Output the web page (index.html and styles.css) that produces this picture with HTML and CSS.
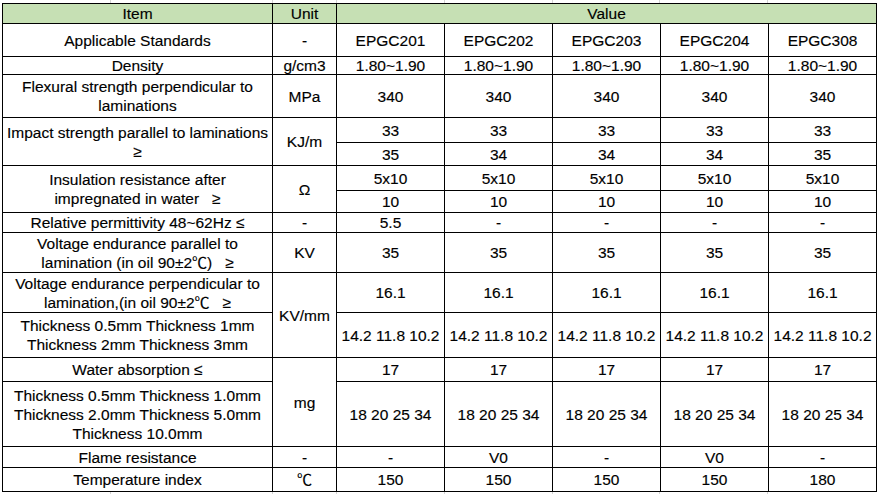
FILE: index.html
```html
<!DOCTYPE html>
<html>
<head>
<meta charset="utf-8">
<link rel="stylesheet" href="styles.css">
</head>
<body>
<table class="spec">
  <colgroup>
    <col class="c-item"><col class="c-unit">
    <col class="c-val"><col class="c-val"><col class="c-val"><col class="c-val"><col class="c-val">
  </colgroup>
  <tr class="r-head"><th>Item</th><th>Unit</th><th colspan="5">Value</th></tr>
  <tr class="r-std"><td>Applicable Standards</td><td>-</td><td>EPGC201</td><td>EPGC202</td><td>EPGC203</td><td>EPGC204</td><td>EPGC308</td></tr>
  <tr class="r-den"><td>Density</td><td>g/cm3</td><td>1.80~1.90</td><td>1.80~1.90</td><td>1.80~1.90</td><td>1.80~1.90</td><td>1.80~1.90</td></tr>
  <tr class="r-flex"><td class="multi">Flexural strength perpendicular to<br>laminations</td><td>MPa</td><td>340</td><td>340</td><td>340</td><td>340</td><td>340</td></tr>
  <tr class="r-imp1"><td rowspan="2" class="multi nowrap">Impact strength parallel to laminations<br>≥</td><td rowspan="2">KJ/m</td><td>33</td><td>33</td><td>33</td><td>33</td><td>33</td></tr>
  <tr class="r-imp2"><td>35</td><td>34</td><td>34</td><td>34</td><td>35</td></tr>
  <tr class="r-ins1"><td rowspan="2" class="multi">Insulation resistance after<br>impregnated in water &nbsp;&nbsp;≥</td><td rowspan="2">Ω</td><td>5x10</td><td>5x10</td><td>5x10</td><td>5x10</td><td>5x10</td></tr>
  <tr class="r-ins2"><td>10</td><td>10</td><td>10</td><td>10</td><td>10</td></tr>
  <tr class="r-rel"><td>Relative permittivity 48~62Hz ≤</td><td>-</td><td>5.5</td><td>-</td><td>-</td><td>-</td><td>-</td></tr>
  <tr class="r-vpar"><td class="multi">Voltage endurance parallel to<br>lamination (in oil 90±2<span class="cjk">℃</span>) &nbsp;&nbsp;≥</td><td>KV</td><td>35</td><td>35</td><td>35</td><td>35</td><td>35</td></tr>
  <tr class="r-vper"><td class="multi">Voltage endurance perpendicular to<br>lamination,(in oil 90±2<span class="cjk">℃</span> &nbsp;&nbsp;≥</td><td rowspan="2">KV/mm</td><td>16.1</td><td>16.1</td><td>16.1</td><td>16.1</td><td>16.1</td></tr>
  <tr class="r-thk"><td class="multi">Thickness 0.5mm Thickness 1mm<br>Thickness 2mm Thickness 3mm</td><td>14.2 11.8 10.2</td><td>14.2 11.8 10.2</td><td>14.2 11.8 10.2</td><td>14.2 11.8 10.2</td><td>14.2 11.8 10.2</td></tr>
  <tr class="r-wat"><td>Water absorption ≤</td><td rowspan="2">mg</td><td>17</td><td>17</td><td>17</td><td>17</td><td>17</td></tr>
  <tr class="r-thk2"><td class="multi">Thickness 0.5mm Thickness 1.0mm<br>Thickness 2.0mm Thickness 5.0mm<br>Thickness 10.0mm</td><td>18 20 25 34</td><td>18 20 25 34</td><td>18 20 25 34</td><td>18 20 25 34</td><td>18 20 25 34</td></tr>
  <tr class="r-flame"><td>Flame resistance</td><td>-</td><td>-</td><td>V0</td><td>-</td><td>V0</td><td>-</td></tr>
  <tr class="r-temp"><td>Temperature index</td><td><span class="cjk">℃</span></td><td>150</td><td>150</td><td>150</td><td>150</td><td>180</td></tr>
</table>
</body>
</html>
```

FILE: styles.css
```css
html, body {
  margin: 0;
  padding: 0;
}

body {
  min-height: 494px;
  box-sizing: border-box;
  padding: 3px 0 0 2px;
  font-family: "Liberation Sans", Arial, "Noto Sans CJK SC", sans-serif;
  font-size: 15.5px;
  color: #000;
  background-color: #fff;
  /* faint spreadsheet gridlines visible around the table */
  background-image:
    linear-gradient(#d4d4d4, #d4d4d4),
    linear-gradient(#d4d4d4, #d4d4d4),
    linear-gradient(#d4d4d4, #d4d4d4),
    linear-gradient(#d4d4d4, #d4d4d4),
    linear-gradient(#d4d4d4, #d4d4d4),
    linear-gradient(#d4d4d4, #d4d4d4),
    linear-gradient(#d4d4d4, #d4d4d4);
  background-size: 1px 100%;
  background-repeat: no-repeat;
  background-position: 110px 0, 272px 0, 336px 0, 444px 0, 552px 0, 659px 0, 767px 0;
}

.spec {
  border-collapse: collapse;
  table-layout: fixed;
  width: 873px;
}

.c-item { width: 270px; }
.c-unit { width: 64px; }
.c-val { width: 108px; }

.spec th,
.spec td {
  border: 1px solid #000;
  padding: 0;
  text-align: center;
  vertical-align: middle;
  font-weight: normal;
  line-height: 17px;
  white-space: nowrap;
  overflow: visible;
  background: #fff;
  -webkit-text-stroke: 0.15px #000;
}

.spec th {
  background: #c6e0b4;
}

.spec .multi {
  line-height: 19px;
}

.cjk {
  font-family: "Noto Sans CJK SC", "Liberation Sans", sans-serif;
  font-size: 15px;
  line-height: 0;
}

.r-head { height: 20px; }
.r-std { height: 33px; }
.r-den { height: 18px; }
.r-flex { height: 43px; }
.r-imp1 { height: 25px; }
.r-imp2 { height: 23px; }
.r-ins1 { height: 25px; }
.r-ins2 { height: 22px; }
.r-rel { height: 20px; }
.r-vpar { height: 40px; }
.r-vper { height: 40px; }
.r-thk { height: 45px; }
.r-wat { height: 24px; }
.r-thk2 { height: 65px; }
.r-flame { height: 21px; }
.r-temp { height: 24px; }
```
